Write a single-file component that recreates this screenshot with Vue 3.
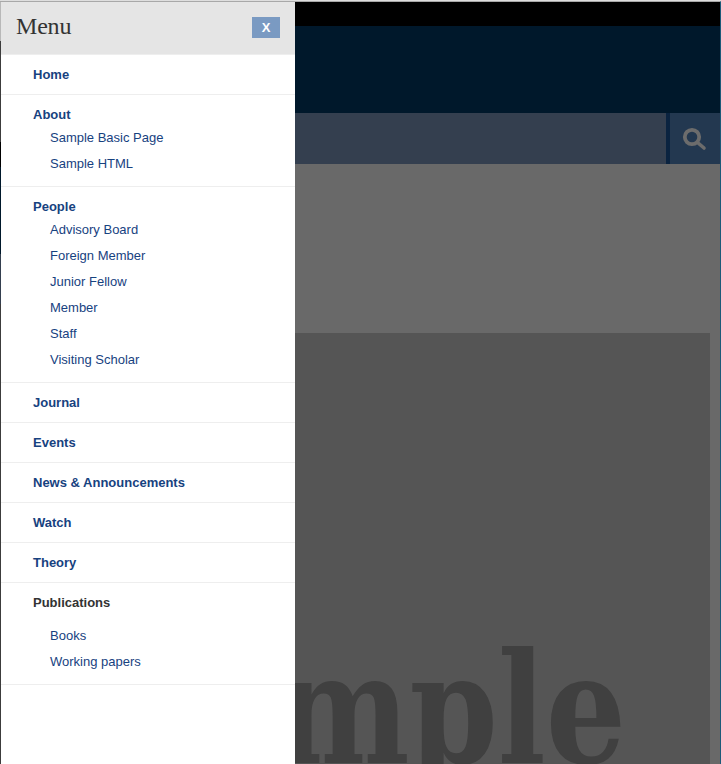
<script setup>
const sections = [
  { label: 'Home' },
  { label: 'About', children: ['Sample Basic Page', 'Sample HTML'] },
  { label: 'People', children: ['Advisory Board', 'Foreign Member', 'Junior Fellow', 'Member', 'Staff', 'Visiting Scholar'] },
  { label: 'Journal' },
  { label: 'Events' },
  { label: 'News & Announcements' },
  { label: 'Watch' },
  { label: 'Theory' },
  { label: 'Publications', children: ['Books', 'Working papers'], dark: true },
]
</script>

<template>
  <div class="page">
    <div class="backdrop">
      <div class="black-bar"></div>
      <div class="navy-bar"></div>
      <div class="search-row">
        <div class="search-field"></div>
        <div class="search-button">
          <svg width="26" height="26" viewBox="0 0 26 26" fill="none">
            <circle cx="10" cy="11" r="7.2" stroke="#6c6c6c" stroke-width="3.8" />
            <path d="M15.5 16.5l6.5 5.5" stroke="#6c6c6c" stroke-width="3.6" stroke-linecap="round" />
          </svg>
        </div>
      </div>
      <div class="content">
        <div class="card">
          <div class="title">Sample</div>
        </div>
      </div>
    </div>

    <div class="edge"></div>

    <aside class="panel">
      <header class="panel-head">
        <span class="panel-title">Menu</span>
        <button class="close">X</button>
      </header>
      <ul class="menu">
        <li v-for="s in sections" :key="s.label" class="section" :class="{ dark: s.dark, parent: s.children }">
          <a class="top">{{ s.label }}</a>
          <ul v-if="s.children" class="sub">
            <li v-for="c in s.children" :key="c"><a>{{ c }}</a></li>
          </ul>
        </li>
      </ul>
    </aside>
  </div>
</template>

<style>
html, body { margin: 0; padding: 0; background: #666; }
</style>

<style scoped>
.page {
  position: relative;
  width: 721px;
  height: 764px;
  overflow: hidden;
  font-family: "Liberation Sans", Arial, sans-serif;
  border-top: 1px solid #dedede;
  box-sizing: border-box;
}
.backdrop {
  display: flex;
  flex-direction: column;
  height: 100%;
  border-top: 1px solid #a8a8a8;
  border-right: 1px solid #1d5a78;
  box-sizing: border-box;
}
.edge {
  position: absolute;
  top: 1px;
  left: 0;
  bottom: 0;
  width: 1px;
  background: linear-gradient(
    to bottom,
    #b8b8b8 0 39px,
    #3c3c3c 39px 140px,
    #000 140px 165px,
    #00182b 165px 252px,
    #343f4f 252px 302px,
    #3c3c3c 302px
  );
}
.black-bar { height: 24px; background: #000; flex: none; }
.navy-bar { height: 87px; background: #00182b; flex: none; }
.search-row { height: 51px; display: flex; flex: none; background: #343f4f; }
.search-field { flex: 1; }
.search-button {
  width: 50px;
  margin-left: 4px;
  background: #233850;
  display: flex;
  align-items: center;
  justify-content: center;
  box-shadow: -4px 0 0 #0a2340;
}
.content {
  flex: 1;
  min-height: 0;
  display: flex;
  flex-direction: column;
  padding: 169px 10px 0 295px;
  background: #696969;
}
.card {
  flex: 1;
  background: #555;
  overflow: hidden;
  display: flex;
  justify-content: flex-end;
  padding-right: 84px;
}
.title {
  font-family: "DejaVu Serif", serif;
  font-weight: 700;
  font-size: 154px;
  line-height: 1;
  margin-top: 299px;
  color: #404040;
  white-space: nowrap;
  transform: scaleX(0.82);
  transform-origin: right center;
  filter: blur(0.7px);
}
.panel {
  position: absolute;
  top: 1px;
  left: 1px;
  bottom: 0;
  width: 294px;
  background: #fff;
}
.panel-head {
  height: 51px;
  display: flex;
  align-items: center;
  justify-content: space-between;
  padding: 0 15px 1px;
  background: #e5e5e5;
  border-bottom: 1px solid #eee;
}
.panel-title {
  font-family: "Liberation Serif", serif;
  font-size: 24px;
  letter-spacing: -0.2px;
  color: #333;
  margin-bottom: 2px;
}
.close {
  width: 28px;
  height: 21px;
  padding: 0;
  border: 0;
  background: #7a9ac2;
  color: #fff;
  font: 700 13px "Liberation Sans", sans-serif;
}
.menu, .sub { list-style: none; margin: 0; padding: 0; }
.section {
  padding: 11px 0 11px 32px;
  border-bottom: 1px solid #eee;
  font-size: 13px;
  line-height: 17px;
}
.section.parent { padding-bottom: 9px; }
.top { font-weight: 700; color: #17427f; display: block; }
.dark .top { color: #333; margin-bottom: 12px; }
.sub { padding-left: 17px; margin-top: 2px; }
.sub li { height: 26px; line-height: 26px; color: #17427f; }
.sub a { display: block; }
</style>
